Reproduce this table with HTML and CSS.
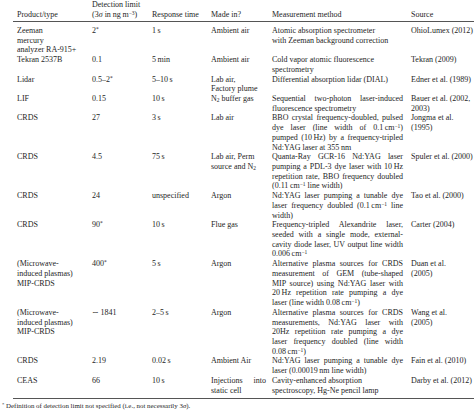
FILE: index.html
```html
<!DOCTYPE html>
<html>
<head>
<meta charset="utf-8">
<link rel="stylesheet" href="styles.css">
</head>
<body>
<table class="tbl">
  <colgroup>
    <col class="c1"><col class="c2"><col class="c3"><col class="c4"><col class="c5"><col class="c6">
  </colgroup>
  <thead>
    <tr>
      <th class="p"><span class="l">Product/type</span></th>
      <th><span class="l">Detection limit</span><span class="l">(3<i>σ</i> in ng&thinsp;m<sup>−3</sup>)</span></th>
      <th><span class="l">Response time</span></th>
      <th><span class="l">Made in?</span></th>
      <th><span class="l">Measurement method</span></th>
      <th><span class="l">Source</span></th>
    </tr>
  </thead>
  <tbody>
    <tr>
      <td class="p"><span class="l">Zeeman</span><span class="l">mercury</span><span class="l">analyzer RA-915+</span></td>
      <td><span class="l">2<sup>*</sup></span></td>
      <td><span class="l">1&thinsp;s</span></td>
      <td class="m"><span class="l">Ambient air</span></td>
      <td class="me"><span class="l">Atomic absorption spectrometer</span><span class="l">with Zeeman background correction</span></td>
      <td><span class="l">OhioLumex (2012)</span></td>
    </tr>
    <tr>
      <td class="p"><span class="l">Tekran 2537B</span></td>
      <td><span class="l">0.1</span></td>
      <td><span class="l">5&thinsp;min</span></td>
      <td class="m"><span class="l">Ambient air</span></td>
      <td class="me"><span class="l">Cold vapor atomic fluorescence</span><span class="l">spectrometry</span></td>
      <td><span class="l">Tekran (2009)</span></td>
    </tr>
    <tr>
      <td class="p"><span class="l">Lidar</span></td>
      <td><span class="l">0.5–2<sup>*</sup></span></td>
      <td><span class="l">5–10&thinsp;s</span></td>
      <td class="m"><span class="l">Lab air,</span><span class="l">Factory plume</span></td>
      <td class="me"><span class="l">Differential absorption lidar (DIAL)</span></td>
      <td><span class="l">Edner et al. (1989)</span></td>
    </tr>
    <tr>
      <td class="p"><span class="l">LIF</span></td>
      <td><span class="l">0.15</span></td>
      <td><span class="l">10&thinsp;s</span></td>
      <td class="m"><span class="l">N<sub>2</sub> buffer gas</span></td>
      <td class="me"><span class="l j">Sequential two-photon laser-induced</span><span class="l">fluorescence spectrometry</span></td>
      <td><span class="l">Bauer et al. (2002,</span><span class="l">2003)</span></td>
    </tr>
    <tr>
      <td class="p"><span class="l">CRDS</span></td>
      <td><span class="l">27</span></td>
      <td><span class="l">3&thinsp;s</span></td>
      <td class="m"><span class="l">Lab air</span></td>
      <td class="me"><span class="l j">BBO crystal frequency-doubled, pulsed</span><span class="l j">dye laser (line width of 0.1&thinsp;cm<sup>−1</sup>)</span><span class="l j">pumped (10&thinsp;Hz) by a frequency-tripled</span><span class="l">Nd:YAG laser at 355&thinsp;nm</span></td>
      <td><span class="l">Jongma et al.</span><span class="l">(1995)</span></td>
    </tr>
    <tr>
      <td class="p"><span class="l">CRDS</span></td>
      <td><span class="l">4.5</span></td>
      <td><span class="l">75&thinsp;s</span></td>
      <td class="m"><span class="l">Lab air, Perm</span><span class="l">source and N<sub>2</sub></span></td>
      <td class="me"><span class="l j">Quanta-Ray GCR-16 Nd:YAG laser</span><span class="l j">pumping a PDL-3 dye laser with 10&thinsp;Hz</span><span class="l j">repetition rate, BBO frequency doubled</span><span class="l">(0.11&thinsp;cm<sup>−1</sup> line width)</span></td>
      <td><span class="l">Spuler et al. (2000)</span></td>
    </tr>
    <tr>
      <td class="p"><span class="l">CRDS</span></td>
      <td><span class="l">24</span></td>
      <td><span class="l">unspecified</span></td>
      <td class="m"><span class="l">Argon</span></td>
      <td class="me"><span class="l j">Nd:YAG laser pumping a tunable dye</span><span class="l j">laser frequency doubled (0.1&thinsp;cm<sup>−1</sup> line</span><span class="l">width)</span></td>
      <td><span class="l">Tao et al. (2000)</span></td>
    </tr>
    <tr>
      <td class="p"><span class="l">CRDS</span></td>
      <td><span class="l">90<sup>*</sup></span></td>
      <td><span class="l">10&thinsp;s</span></td>
      <td class="m"><span class="l">Flue gas</span></td>
      <td class="me"><span class="l j">Frequency-tripled Alexandrite laser,</span><span class="l j">seeded with a single mode, external-</span><span class="l j">cavity diode laser, UV output line width</span><span class="l">0.006&thinsp;cm<sup>−1</sup></span></td>
      <td><span class="l">Carter (2004)</span></td>
    </tr>
    <tr>
      <td class="p"><span class="l">(Microwave-</span><span class="l">induced plasmas)</span><span class="l">MIP-CRDS</span></td>
      <td><span class="l">400<sup>*</sup></span></td>
      <td><span class="l">5&thinsp;s</span></td>
      <td class="m"><span class="l">Argon</span></td>
      <td class="me"><span class="l j">Alternative plasma sources for CRDS</span><span class="l j">measurement of GEM (tube-shaped</span><span class="l j">MIP source) using Nd:YAG laser with</span><span class="l j">20&thinsp;Hz repetition rate pumping a dye</span><span class="l">laser (line width 0.08&thinsp;cm<sup>−1</sup>)</span></td>
      <td><span class="l">Duan et al.</span><span class="l">(2005)</span></td>
    </tr>
    <tr>
      <td class="p"><span class="l">(Microwave-</span><span class="l">induced plasmas)</span><span class="l">MIP-CRDS</span></td>
      <td><span class="l">∼&thinsp;1841</span></td>
      <td><span class="l">2–5&thinsp;s</span></td>
      <td class="m"><span class="l">Argon</span></td>
      <td class="me"><span class="l j">Alternative plasma sources for CRDS</span><span class="l j">measurements, Nd:YAG laser with</span><span class="l j">20Hz repetition rate pumping a dye</span><span class="l j">laser frequency doubled (line width</span><span class="l">0.08&thinsp;cm<sup>−1</sup>)</span></td>
      <td><span class="l">Wang et al.</span><span class="l">(2005)</span></td>
    </tr>
    <tr>
      <td class="p"><span class="l">CRDS</span></td>
      <td><span class="l">2.19</span></td>
      <td><span class="l">0.02&thinsp;s</span></td>
      <td class="m"><span class="l">Ambient Air</span></td>
      <td class="me"><span class="l j">Nd:YAG laser pumping a tunable dye</span><span class="l">laser (0.00019&thinsp;nm line width)</span></td>
      <td><span class="l">Fain et al. (2010)</span></td>
    </tr>
    <tr class="last">
      <td class="p"><span class="l">CEAS</span></td>
      <td><span class="l">66</span></td>
      <td><span class="l">10&thinsp;s</span></td>
      <td class="m"><span class="l j">Injections into</span><span class="l">static cell</span></td>
      <td class="me"><span class="l">Cavity-enhanced absorption</span><span class="l">spectroscopy, Hg-Ne pencil lamp</span></td>
      <td><span class="l">Darby et al. (2012)</span></td>
    </tr>
  </tbody>
</table>
<p class="foot"><sup>*</sup> Definition of detection limit not specified (i.e., not necessarily 3<i>σ</i>).</p>
</body>
</html>
```

FILE: styles.css
```css
html, body {
  margin: 0;
  padding: 0;
  background: #ffffff;
}
body {
  font-family: "Liberation Serif", "Times New Roman", serif;
  font-size: 8px;
  line-height: 9.72px;
  color: #252525;
  width: 474px;
  overflow: hidden;
}
.tbl {
  border-collapse: collapse;
  table-layout: fixed;
  width: 461px;
  margin-left: 13px;
}
.c1 { width: 79px; }
.c2 { width: 60px; }
.c3 { width: 59px; }
.c4 { width: 61px; }
.c5 { width: 139px; }
.c6 { width: 63px; }
.tbl th {
  font-weight: normal;
  text-align: left;
  vertical-align: bottom;
  padding: 0 0 2px 0;
  border-bottom: 1px solid #555;
  white-space: nowrap;
}
.tbl td {
  padding: 0;
  vertical-align: top;
  white-space: nowrap;
}
.tbl th.p, .tbl td.p {
  padding-left: 4px;
}
.tbl td.m {
  padding-right: 6px;
}
.tbl td.me {
  padding-right: 8px;
}
.tbl tbody tr:first-child td {
  padding-top: 3.5px;
}
.tbl tr.last td {
  padding-bottom: 3px;
  border-bottom: 1px solid #555;
}
.l {
  display: block;
  height: 9.72px;
}
.j {
  text-align: justify;
  text-align-last: justify;
}
sup {
  font-size: 0.68em;
  line-height: 0;
  vertical-align: 0.42em;
}
sub {
  font-size: 0.68em;
  line-height: 0;
  vertical-align: -0.2em;
}
.foot {
  margin: 3px 0 0 2px;
  font-size: 6.9px;
  line-height: 8px;
  white-space: nowrap;
}
```
